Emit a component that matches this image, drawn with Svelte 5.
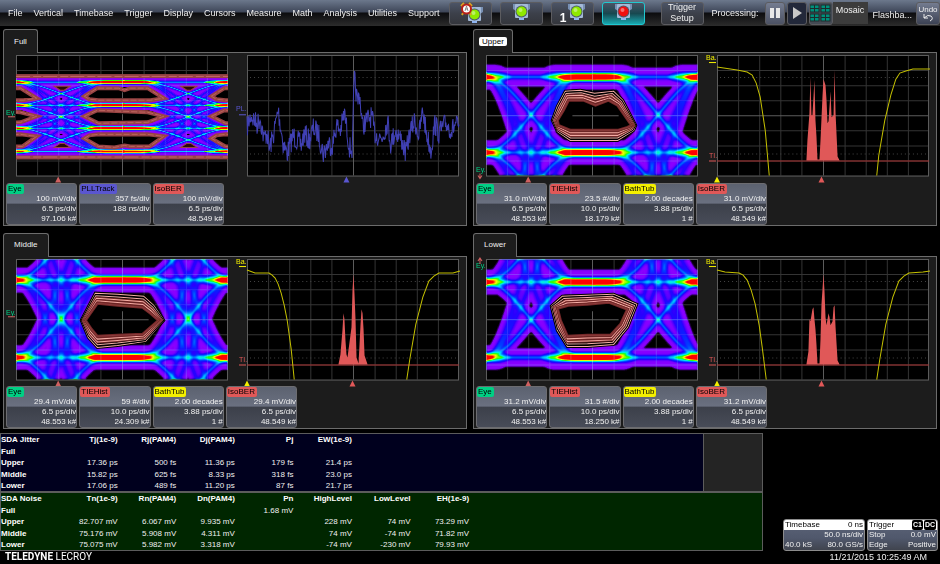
<script>
  const menus = ['File', 'Vertical', 'Timebase', 'Trigger', 'Display', 'Cursors', 'Measure', 'Math', 'Analysis', 'Utilities', 'Support'];

  const modes = [
    { name: 'Auto', lamp: '#8fe800', clock: true },
    { name: 'Normal', lamp: '#8fe800' },
    { name: 'Single', lamp: '#8fe800', one: true },
    { name: 'Stop', lamp: '#f01010', active: true }
  ];

  const GREEN = '#00d084';
  const RED = '#e05858';
  const YELLOW = '#f4f000';
  const BLUE = '#5a56d0';

  // unit interval in plot units, the plot itself is 211 x 120
  const UI = 126.5;
  const centers = [-82.5, 44, 170.5, 297];

  function transitions(levels) {
    const paths = [];
    for (const c of centers) {
      levels.forEach((a, i) => {
        levels.forEach((b, j) => {
          paths.push({
            step: Math.abs(i - j),
            d: `M${c - 64},${a} L${c - 44},${a} C${c - 15},${a} ${c + 17},${b} ${c + 45},${b} L${c + 64},${b}`
          });
        });
      });
    }
    return paths;
  }

  // lens shaped patch around the settled part of each level
  function flats(levels, from, to, h) {
    const list = [];
    for (const k of [-1, 0, 1]) {
      for (const y of levels) {
        const a = from + k * UI;
        const b = to + k * UI;
        list.push(`M${a},${y} Q${a + 6},${y - h} ${a + 16},${y - h} L${b - 16},${y - h} Q${b - 6},${y - h} ${b},${y} Q${b - 6},${y + h} ${b - 16},${y + h} L${a + 16},${y + h} Q${a + 6},${y + h} ${a},${y}Z`);
      }
    }
    return list;
  }

  function contours(outer, inner) {
    return [0, 0.25, 0.5, 0.75, 1].map((t) =>
      outer.map((p, i) => `${p[0] + (inner[i][0] - p[0]) * t},${p[1] + (inner[i][1] - p[1]) * t}`).join(' ')
    );
  }

  const smallEyes = [];
  for (const k of [-1, 0, 1]) {
    const x = k * UI;
    smallEyes.push(`${68 + x},41 ${81 + x},33 ${102 + x},33 ${108 + x},35 ${114 + x},33 ${131 + x},33 ${147 + x},43 ${134 + x},45 ${82 + x},45 ${73 + x},44`);
    smallEyes.push(`${68 + x},61 ${81 + x},55 ${131 + x},57 ${147 + x},61 ${131 + x},67 ${82 + x},68`);
    smallEyes.push(`${68 + x},83 ${73 + x},80 ${82 + x},79 ${131 + x},79 ${147 + x},81 ${133 + x},91 ${114 + x},91 ${108 + x},90 ${98 + x},92 ${82 + x},91`);
  }

  const trackKeys = [[0, 72], [4, 60], [10, 69], [13, 62], [17, 84], [20, 76], [22, 94], [26, 81], [31, 55], [36, 88], [40, 98], [46, 80], [54, 90], [57, 78], [62, 85], [66, 73], [71, 78], [76, 98], [81, 88], [85, 90], [89, 70], [93, 75], [97, 58], [102, 92], [105, 94], [106, 48], [107, 25], [110, 48], [112, 38], [115, 71], [119, 65], [124, 61], [127, 78], [134, 83], [140, 66], [143, 88], [148, 75], [154, 85], [158, 98], [162, 78], [167, 65], [171, 81], [175, 55], [178, 75], [183, 95], [187, 68], [191, 78], [198, 68], [204, 75], [208, 68], [211, 76]];

  function track() {
    let seed = 7;
    const rand = () => {
      seed = (seed * 16807) % 2147483647;
      return seed / 2147483647 - 0.5;
    };
    const pts = [];
    for (let x = 0; x <= 211; x += 0.5) {
      let i = 0;
      while (i < trackKeys.length - 2 && trackKeys[i + 1][0] < x) i++;
      const [x0, y0] = trackKeys[i];
      const [x1, y1] = trackKeys[i + 1];
      const y = y0 + ((y1 - y0) * (x - x0)) / (x1 - x0) + rand() * 22;
      pts.push(`${x},${y.toFixed(1)}`);
    }
    return pts.join(' ');
  }

  const chip = (name, color, ...lines) => ({ name, color, lines });

  const panels = [
    {
      name: 'Full',
      small: true,
      levels: [27, 50, 73, 96],
      eyeY: 61,
      track: track(),
      chips: [
        chip('Eye', GREEN, '100 mV/div', '6.5 ps/div', '97.106 k#'),
        chip('PLLTrack', BLUE, '357 fs/div', '188 ns/div', ''),
        chip('IsoBER', RED, '100 mV/div', '6.5 ps/div', '48.549 k#')
      ]
    },
    {
      name: 'Upper',
      selected: true,
      levels: [22, 97, 172, 247],
      eyeY: 117,
      arrow: 'down',
      rings: contours(
        [[66, 65], [71, 51], [79, 36], [94, 35], [108, 38], [127, 36], [136, 45], [149, 70], [147, 75], [131, 85], [84, 85], [71, 76]],
        [[71, 65], [77, 55], [82, 45], [97, 45], [109, 50], [122, 45], [131, 50], [145, 70], [141, 72], [131, 75], [84, 75], [72, 70]]
      ),
      hist: '89,105 90,85 92,58 93,22 94,60 95,60 97,25 98,65 99,81 100,104 102,104 103,85 105,41 106,24 108,30 109,45 110,68 111,66 113,36 114,62 116,60 117,15 118,58 120,101 122,105',
      tub: ['0,12 20,15 30,17 35,20 39,28 43,42 48,75 52,120', '159,120 161,100 167,65 173,40 178,24 182,18 188,16 195,14 212,14'],
      tieX: 104,
      chips: [
        chip('Eye', GREEN, '31.0 mV/div', '6.5 ps/div', '48.553 k#'),
        chip('TIEHist', RED, '23.5 #/div', '10.0 ps/div', '18.179 k#'),
        chip('BathTub', YELLOW, '2.00 decades', '3.88 ps/div', '1 #'),
        chip('IsoBER', RED, '31.0 mV/div', '6.5 ps/div', '48.549 k#')
      ]
    },
    {
      name: 'Middle',
      levels: [-56, 21, 98, 175],
      eyeY: 57,
      rings: contours(
        [[65, 61], [79, 34], [101, 35], [127, 37], [137, 46], [147, 61], [129, 82], [101, 86], [81, 88], [72, 78]],
        [[69, 61], [81, 44], [101, 46], [126, 48], [134, 54], [142, 61], [126, 75], [101, 76], [81, 77], [75, 70]]
      ),
      hist: '91,105 93,95 95,71 96,54 97,60 98,81 99,95 100,98 102,83 104,68 105,31 106,15 107,35 108,60 109,98 111,104 112,85 113,65 114,50 115,54 116,70 117,96 120,105',
      tub: ['0,11 8,14 22,14 25,16 28,19 31,25 34,34 37,46 40,61 44,90 47,120', '159,120 162,100 168,65 175,38 181,22 186,17 191,14 205,14 212,12'],
      tieX: 105,
      chips: [
        chip('Eye', GREEN, '29.4 mV/div', '6.5 ps/div', '48.553 k#'),
        chip('TIEHist', RED, '59 #/div', '10.0 ps/div', '24.309 k#'),
        chip('BathTub', YELLOW, '2.00 decades', '3.88 ps/div', '1 #'),
        chip('IsoBER', RED, '29.4 mV/div', '6.5 ps/div', '48.549 k#')
      ]
    },
    {
      name: 'Lower',
      levels: [-127, -52, 23, 98],
      eyeY: 10,
      arrow: 'up',
      rings: contours(
        [[65, 47], [76, 37], [101, 36], [127, 35], [150, 45], [141, 68], [127, 85], [101, 87], [81, 87], [71, 71]],
        [[71, 49], [82, 46], [101, 45], [122, 43], [141, 50], [134, 65], [124, 76], [101, 76], [81, 77], [74, 61]]
      ),
      hist: '89,105 91,92 92,60 93,62 95,50 96,48 97,60 98,70 99,85 100,104 102,104 103,80 104,45 105,30 106,15 107,32 108,58 109,66 111,54 112,58 113,66 115,62 116,48 117,46 118,68 120,101 122,105',
      tub: ['0,11 8,13 22,14 26,16 30,21 34,31 38,45 42,66 45,88 49,120', '159,120 162,100 168,65 175,38 181,22 186,17 191,14 205,13 212,12'],
      tieX: 104,
      chips: [
        chip('Eye', GREEN, '31.2 mV/div', '6.5 ps/div', '48.553 k#'),
        chip('TIEHist', RED, '31.5 #/div', '10.0 ps/div', '18.250 k#'),
        chip('BathTub', YELLOW, '2.00 decades', '3.88 ps/div', '1 #'),
        chip('IsoBER', RED, '31.2 mV/div', '6.5 ps/div', '48.549 k#')
      ]
    }
  ];

  const tables = [
    {
      id: 'jitter',
      rows: [
        ['SDA Jitter', 'Tj(1e-9)', 'Rj(PAM4)', 'Dj(PAM4)', 'Pj', 'EW(1e-9)', '', ''],
        ['Full', '', '', '', '', '', '', ''],
        ['Upper', '17.36 ps', '500 fs', '11.36 ps', '179 fs', '21.4 ps', '', ''],
        ['Middle', '15.82 ps', '625 fs', '8.33 ps', '318 fs', '23.0 ps', '', ''],
        ['Lower', '17.06 ps', '489 fs', '11.20 ps', '87 fs', '21.7 ps', '', '']
      ]
    },
    {
      id: 'noise',
      rows: [
        ['SDA Noise', 'Tn(1e-9)', 'Rn(PAM4)', 'Dn(PAM4)', 'Pn', 'HighLevel', 'LowLevel', 'EH(1e-9)'],
        ['Full', '', '', '', '1.68 mV', '', '', ''],
        ['Upper', '82.707 mV', '6.067 mV', '9.935 mV', '', '228 mV', '74 mV', '73.29 mV'],
        ['Middle', '75.176 mV', '5.908 mV', '4.311 mV', '', '74 mV', '-74 mV', '71.82 mV'],
        ['Lower', '75.075 mV', '5.982 mV', '3.318 mV', '', '-74 mV', '-230 mV', '79.93 mV']
      ]
    }
  ];
</script>

{#snippet grid(dots)}
  <rect width="211" height="120" fill="#000" />
  {#each [1, 2, 3, 4, 6, 7, 8, 9] as i}
    <path d="M{Math.round(i * 21.1) + 0.5},0 V120" stroke="#343434" />
  {/each}
  {#each [1, 2, 3, 5, 6, 7] as i}
    <path d="M0,{i * 15 + 0.5} H211" stroke="#343434" />
  {/each}
  {#if dots}
    <path d="M3,22.5 H211 M3,98.5 H211" stroke="#444" stroke-dasharray="1 3" />
  {/if}
  <path d="M106,0 V120 M0,60.5 H211" stroke="#5c5c5c" />
  <rect x="0.5" y="0.5" width="210" height="120" fill="none" stroke="#5c5c5c" />
{/snippet}

<svg class="defs" width="0" height="0" aria-hidden="true">
  <filter id="heat" color-interpolation-filters="sRGB" filterUnits="userSpaceOnUse" x="0" y="0" width="211" height="120">
    <feGaussianBlur stdDeviation="1" />
    <feComponentTransfer>
      <feFuncR type="table" tableValues="0 .48 .55 .5 .35 .16 .06 0 0 0 0 0 0 .2 .6 .95 1 1 1 1 1" />
      <feFuncG type="table" tableValues="0 0 0 0 0 0 .1 .25 .45 .65 .85 .97 1 1 1 1 .7 .3 0 0 0" />
      <feFuncB type="table" tableValues="0 .95 1 1 1 1 1 1 1 1 1 .8 .4 0 0 0 0 0 0 0 0" />
    </feComponentTransfer>
  </filter>
  <filter id="heat-fine" color-interpolation-filters="sRGB" filterUnits="userSpaceOnUse" x="0" y="0" width="211" height="120">
    <feGaussianBlur stdDeviation="0.5" />
    <feComponentTransfer>
      <feFuncR type="table" tableValues="0 .48 .55 .5 .35 .16 .06 0 0 0 0 0 0 .2 .6 .95 1 1 1 1 1" />
      <feFuncG type="table" tableValues="0 0 0 0 0 0 .1 .25 .45 .65 .85 .97 1 1 1 1 .7 .3 0 0 0" />
      <feFuncB type="table" tableValues="0 .95 1 1 1 1 1 1 1 1 1 .8 .4 0 0 0 0 0 0 0 0" />
    </feComponentTransfer>
  </filter>
</svg>

<div class="scope">
  <header>
    <nav>
      {#each menus as menu}
        <button class="menu">{menu}</button>
      {/each}
    </nav>
    <div class="modes">
      {#each modes as mode}
        <button class="tool" class:active={mode.active} aria-label={mode.name}>
          <svg width="34" height="22" viewBox="0 0 34 22">
            <g transform={mode.one ? 'translate(4 0)' : mode.clock ? 'translate(4 3)' : ''}>
              <path d="M9,2 H26 V7 L23,9 V13 L21,15 H14 L12,13 V9 L9,7Z" fill="#7890b4" />
              <rect x="11" y="2" width="13" height="14" rx="1" fill="#a4bad8" />
              <path d="M15,16 H20 V18 H15Z" fill="#8fb4f0" />
              <circle cx="17.5" cy="9.5" r="6" fill="#4c5a6c" />
              <circle cx="17.5" cy="9.5" r="5" fill={mode.lamp} />
              <circle cx="16.5" cy="8" r="2" fill="#fff" opacity="0.4" />
            </g>
            {#if mode.clock}
              <path d="M8,4 L11,1 M19,4 L16,1 M10,11 L9,13 M17,11 L18,13" stroke="#d8a020" stroke-width="2" />
              <circle cx="13.5" cy="7" r="4.5" fill="#fff" stroke="#b82018" stroke-width="2" />
              <path d="M13.5,4 L12,9 M13.5,4 L15,9 M12,7 H15" fill="none" stroke="#777" stroke-width="0.8" />
            {/if}
            {#if mode.one}
              <text class="one" x="8" y="20">1</text>
            {/if}
          </svg>
        </button>
      {/each}
    </div>
    <button class="tool setup">Trigger<br />Setup</button>
    <span class="processing">Processing:</span>
    <div class="run">
      <button class="tool square" aria-label="Pause">
        <svg width="12" height="12" viewBox="0 0 12 12"><path d="M1,1 h4 v10 h-4z M7,1 h4 v10 h-4z" fill="#e8e8e8" /></svg>
      </button>
      <button class="tool square dark" aria-label="Play">
        <svg width="12" height="12" viewBox="0 0 12 12"><path d="M2,0 L11,6 L2,12Z" fill="#c8c8c8" /></svg>
      </button>
    </div>
    <button class="tool mosaic-icon" aria-label="Grid layout">
      <svg width="21" height="18" viewBox="0 0 21 18">
        {#each [[0, 1], [11, 1], [0, 10], [11, 10]] as [x, y]}
          <rect {x} {y} width="9" height="7" fill="#00907c" stroke="#1c2c2c" />
          <path d="M{x},{y + 3.5} h9 M{x + 4.5},{y} v7" stroke="#1c2c2c" />
        {/each}
      </svg>
    </button>
    <button class="mosaic">Mosaic</button>
    <button class="menu flash">Flashba...</button>
    <button class="tool undo">
      Undo
      <svg width="11" height="8" viewBox="0 0 11 8"><path d="M1,0 V4 H5 M1,4 Q5,0 8,2 Q11,5 7,7" fill="none" stroke="#eee" /></svg>
    </button>
  </header>

  <main>
    {#each panels as panel}
      <section>
        <button class="tab"><span class:selected={panel.selected}>{panel.name}</span></button>
        <div class="panel">
          <div class="plots">
            <svg class="plot" viewBox="0 0 211 120">
              {@render grid(false)}
              <svg width="211" height="120">
                <g class="heat" filter={panel.small ? 'url(#heat-fine)' : 'url(#heat)'}>
                  <rect width="211" height="120" fill="#000" />
                  <g opacity="0.11" fill="none" stroke="#fff">
                    {#each transitions(panel.levels) as t}
                      <path d={t.d} stroke-width={panel.small ? 8 : t.step ? 13 : 17} />
                    {/each}
                    {#each flats(panel.levels, 52, 152, panel.small ? 3 : 11) as d}
                      <path {d} fill="#fff" />
                    {/each}
                  </g>
                  <g fill="none" stroke="#fff">
                    {#each transitions(panel.levels) as t}
                      <path d={t.d} stroke-width={panel.small ? 4 : 8} opacity="0.1" />
                      <path d={t.d} stroke-width={panel.small ? 1 : 2} opacity={t.step < 2 ? 0.36 : 0.13} />
                    {/each}
                  </g>
                  {#if panel.small}
                    {#each flats(panel.levels, 60, 144, 2) as d}<path {d} fill="#fff" opacity="0.4" />{/each}
                    {#each flats(panel.levels, 70, 135, 1) as d}<path {d} fill="#fff" opacity="0.8" />{/each}
                  {:else}
                    {#each flats(panel.levels, 54, 152, 6) as d}<path {d} fill="#fff" opacity="0.18" />{/each}
                    {#each flats(panel.levels, 60, 146, 4) as d}<path {d} fill="#fff" opacity="0.35" />{/each}
                    {#each flats(panel.levels, 69, 136, 3) as d}<path {d} fill="#fff" opacity="0.9" />{/each}
                  {/if}
                </g>
                {#if panel.small}
                  <rect x="-2" y="19" width="215" height="4" fill="#984444" />
                  <rect x="-2" y="100" width="215" height="4" fill="#984444" />
                  <path d="M0,21.5 H211 M0,101.5 H211" stroke="#c06464" stroke-dasharray="14 3 8 2" />
                  {#each [46, 172] as x}
                    <path d="M{x - 8},31 h16 l-6,4 h-4z M{x - 8},92 h16 l-6,-4 h-4z" fill="#2a0808" stroke="#984444" />
                  {/each}
                  {#each smallEyes as points}
                    <polygon {points} fill="#000" stroke="#984444" stroke-width="4" />
                    <polygon {points} fill="none" stroke="#c87068" stroke-dasharray="6 2" stroke-width="0.7" />
                  {/each}
                  <path d="M106,37 V43 M106,59 V65 M106,81 V88" stroke="#5c5c5c" />
                {:else}
                  {#each panel.rings as points, i}
                    <polygon {points} fill="#000" stroke={i > 1 ? '#742828' : '#000'} stroke-width="3" />
                    <polygon {points} fill="none" stroke={i > 3 ? '#8c3c3c' : '#f4aca4'} />
                  {/each}
                  <path d="M106,52 V74 M86,60.5 H132" stroke="#5c5c5c" />
                {/if}
              </svg>
              <text class="trace" x="-10" y={panel.eyeY - 1} fill={GREEN}>Ey.</text>
              {#if panel.arrow === 'down'}
                <path d="M-6,118 V122 M-8,120 l2,3 l2,-3" fill="none" stroke="#d06060" />
              {:else if panel.arrow === 'up'}
                <path d="M-6,5 V0 M-8,2 l2,-3 l2,3" fill="none" stroke="#d06060" />
              {:else}
                <path d="M-8,{panel.eyeY + 0.5} h7" stroke="#d06060" />
              {/if}
              <path d="M42,121 l3,6 h-6z" fill="#d06060" />
            </svg>

            <svg class="plot" viewBox="0 0 211 120">
              {@render grid(true)}
              {#if panel.track}
                <polyline points={panel.track} fill="none" stroke="#4040b4" />
                <text class="trace" x="-11" y="56" fill={BLUE}>PL.</text>
                <path d="M-8,59.5 h7" stroke={BLUE} />
                <path d="M99,121 l3,6 h-6z" fill={BLUE} />
              {:else}
                <path d="M0,105.5 H211" stroke="#a83030" />
                <polygon points={panel.hist} fill={RED} />
                {#each panel.tub as points}
                  <polyline {points} fill="none" stroke="#c4c000" />
                {/each}
                <text class="trace" x="-11" y="5" fill={YELLOW}>Ba.</text>
                <path d="M-8,7.5 h7" stroke={YELLOW} />
                <text class="trace" x="-8" y="103" fill={RED}>TI.</text>
                <path d="M-8,105.5 h7" stroke={RED} />
                <path d="M0,121 l3,6 h-6z" fill={YELLOW} />
                <path d="M{panel.tieX},121 l3,6 h-6z" fill={RED} />
              {/if}
            </svg>
          </div>
          <div class="chips">
            {#each panel.chips as c}
              <button class="chip">
                <span class="label" style="background: {c.color}">{c.name}</span>
                {#each c.lines as line}
                  <span class="line">{line}</span>
                {/each}
              </button>
            {/each}
          </div>
        </div>
      </section>
    {/each}
  </main>

  <div class="bottom">
    <div class="measurements">
      {#each tables as t}
        <table class={t.id}>
          <tbody>
            {#each t.rows as row, i}
              <tr>
                <th>{row[0]}</th>
                {#each row.slice(1) as cell}
                  {#if i === 0}<th>{cell}</th>{:else}<td>{cell}</td>{/if}
                {/each}
                <td colspan="4"></td>
                {#if i === 0}<td class="end" rowspan="5"></td>{/if}
              </tr>
            {/each}
          </tbody>
        </table>
      {/each}
    </div>
    <div class="status">
      <button class="box timebase">
        <span class="title"><span>Timebase</span><span>0 ns</span></span>
        <span class="row"><span></span><span>50.0 ns/div</span></span>
        <span class="row"><span>40.0 kS</span><span>80.0 GS/s</span></span>
      </button>
      <button class="box trigger">
        <span class="title"><span>Trigger</span><span class="tags"><b>C1</b><b>DC</b></span></span>
        <span class="row"><span>Stop</span><span>0.0 mV</span></span>
        <span class="row"><span>Edge</span><span>Positive</span></span>
      </button>
    </div>
  </div>

  <footer>
    <div class="brand"><b>TELEDYNE</b> LECROY</div>
    <time>11/21/2015 10:25:49 AM</time>
  </footer>
</div>

<style>
  :global(body) {
    margin: 0;
    background: #000;
  }

  .defs {
    position: absolute;
  }

  .scope {
    font-family: 'Liberation Sans', Arial, sans-serif;
    font-size: 8px;
    line-height: 10px;
    color: #f0f0f0;
    background: #000;
  }

  button {
    font: inherit;
    color: inherit;
    margin: 0;
    padding: 0;
    border: none;
    background: none;
    cursor: pointer;
  }

  header {
    display: flex;
    align-items: center;
    height: 26px;
    font-size: 9px;
    background: linear-gradient(#6c788c, #3e4658 46%, #0c0c0e 50%, #2c2c2c);
    white-space: nowrap;
  }

  nav {
    display: flex;
    gap: 11px;
    padding-left: 8px;
  }

  .modes {
    display: flex;
    gap: 8px;
    margin-left: 9px;
  }

  .tool {
    display: flex;
    align-items: center;
    justify-content: center;
    box-sizing: border-box;
    width: 43px;
    height: 23px;
    border: 1px solid #5c5c60;
    border-radius: 3px;
    background: linear-gradient(#4c5466, #3c404a 50%, #34363c);
  }

  .tool.active {
    border-color: #20c8d0;
    background: linear-gradient(#4c5466, #174850 50%, #18a8b0);
  }

  .one {
    font-size: 12px;
    font-weight: bold;
    fill: #fff;
    text-anchor: middle;
  }

  .tool.setup {
    margin-left: 16px;
    line-height: 11px;
  }

  .processing {
    margin: 0 6px 0 8px;
  }

  .run {
    display: flex;
    gap: 2px;
  }

  .tool.square {
    width: 20px;
    background: linear-gradient(#747c90, #4c5264);
  }

  .tool.square.dark {
    background: #22283a;
  }

  .tool.mosaic-icon {
    width: 24px;
    margin-left: 2px;
    background: #444a54;
  }

  .mosaic {
    width: 35px;
    height: 22px;
    padding-bottom: 6px;
    background: #3c3c3c;
  }

  .flash {
    margin-left: auto;
    padding-top: 3px;
  }

  .tool.undo {
    flex-direction: column;
    width: 24px;
    margin-left: 4px;
    font-size: 8px;
    line-height: 9px;
    background: linear-gradient(#747c90, #3c4254);
  }

  main {
    display: grid;
    grid-template-columns: 1fr 1fr;
    gap: 7px 6px;
    padding: 3px 3px 0;
  }

  .tab {
    position: relative;
    display: block;
    box-sizing: border-box;
    height: 24px;
    margin-bottom: -1px;
    padding: 0 10px;
    border: 1px solid #6c6c6c;
    border-bottom: none;
    border-radius: 3px 3px 0 0;
    background: #1c1c1c;
  }

  .tab .selected {
    margin: 0 -5px;
    padding: 0 3px;
    border-radius: 2px;
    background: #fff;
    color: #000;
  }

  .panel {
    border: 1px solid #6c6c6c;
    background: #1c1c1c;
  }

  .plots {
    display: grid;
    grid-template-columns: 1fr 1fr;
    gap: 19px;
    padding: 2px 7px 0 12px;
  }

  .plot {
    display: block;
    width: 100%;
    overflow: visible;
  }

  .heat {
    mix-blend-mode: lighten;
  }

  .trace {
    font-size: 7px;
  }

  .chips {
    display: grid;
    grid-template-columns: repeat(4, 16%);
    margin-top: 7px;
    padding: 0 2px;
  }

  .chip {
    display: flex;
    flex-direction: column;
    align-items: flex-end;
    height: 42px;
    box-sizing: border-box;
    margin-right: 2px;
    border: 1px solid #6c6c70;
    border-radius: 3px;
    background: linear-gradient(#5c6270, #6a7080 48%, #3c404a 50%, #484c58);
    overflow: hidden;
  }

  .label {
    align-self: flex-start;
    padding: 0 2px 0 1px;
    border-radius: 2px;
    color: #000;
  }

  .line {
    height: 10px;
  }

  .bottom {
    display: flex;
    justify-content: space-between;
    align-items: flex-end;
    padding: 4px 2px 0 0;
  }

  .measurements {
    width: 81.3%;
  }

  table {
    box-sizing: border-box;
    width: 100%;
    height: 59px;
    table-layout: fixed;
    border-collapse: collapse;
    border: 1px solid #5c5c5c;
  }

  .jitter {
    background: #00001e;
  }

  .noise {
    background: #002600;
  }

  th,
  td {
    padding: 0;
    line-height: 11px;
    text-align: right;
    white-space: nowrap;
  }

  th {
    color: #fff;
  }

  th:first-child {
    text-align: left;
  }

  .jitter .end {
    border-left: 1px solid #5c5c5c;
    background: #242424;
  }

  .status {
    display: flex;
    gap: 2px;
  }

  .box {
    box-sizing: border-box;
    height: 32px;
    border: 1px solid #8c8c8c;
    border-radius: 3px;
    background: linear-gradient(#5c6478, #50586c 60%, #40444e);
    overflow: hidden;
  }

  .timebase {
    width: 82px;
  }

  .trigger {
    width: 71px;
  }

  .title,
  .row {
    display: flex;
    justify-content: space-between;
    padding: 0 1px;
  }

  .title {
    background: #fff;
    color: #000;
  }

  .tags {
    display: flex;
    gap: 1px;
  }

  .tags b {
    padding: 0 1px;
    border-radius: 2px;
    background: #000;
    color: #fff;
    font-size: 7px;
  }

  footer {
    display: flex;
    justify-content: space-between;
    padding: 0 13px 0 5px;
    font-size: 9px;
    line-height: 13px;
  }

  .brand {
    font-family: Roboto, sans-serif;
    font-size: 10px;
    line-height: 11px;
    color: #fff;
  }
</style>
